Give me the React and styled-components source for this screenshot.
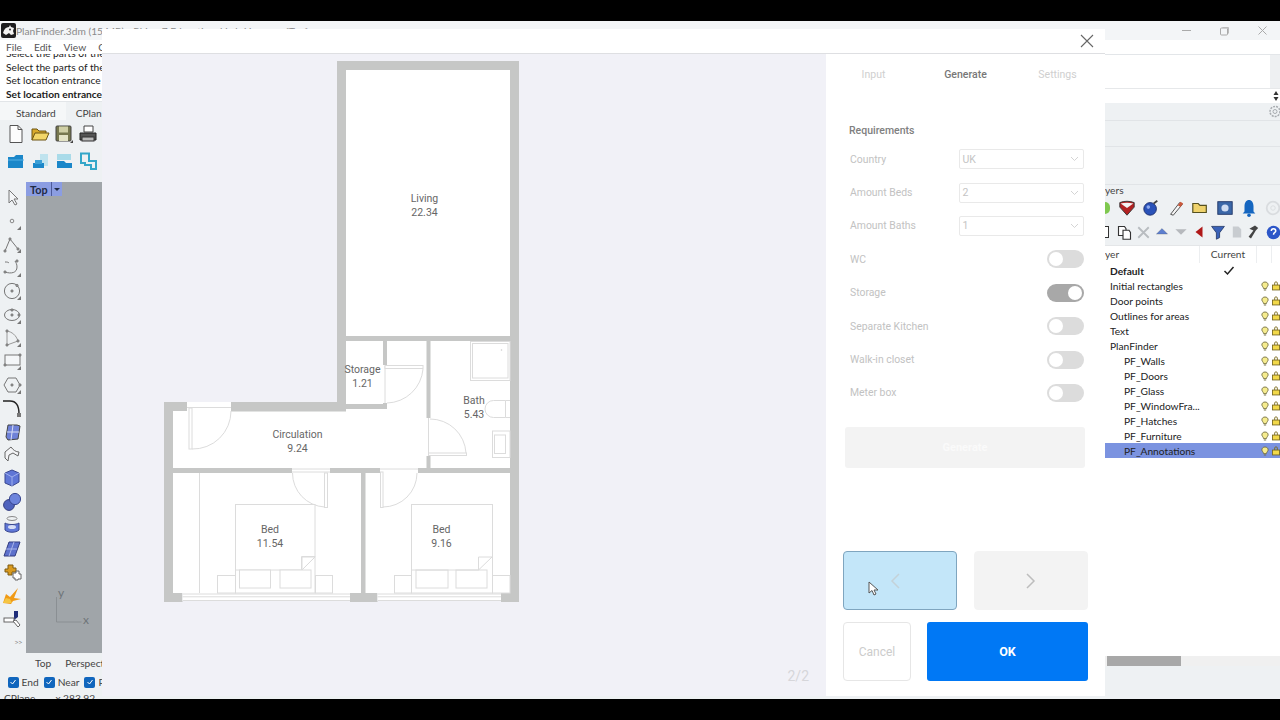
import React from "react"
import styled, { createGlobalStyle } from "styled-components"

const UI_FONT = `Roboto, "Noto Sans", sans-serif`
const RHINO_FONT = `Lato, "Noto Sans", sans-serif`
const RHINO_SIZE = "10.2px"

const GlobalStyle = createGlobalStyle`
  html, body { margin: 0; padding: 0; background: #000; }
  * { box-sizing: border-box; }
  body { font-family: ${RHINO_FONT}; }
`

const Page = styled.div`
  position: relative;
  width: 1280px;
  height: 720px;
  padding: 21px 0;
  background: #000;
  overflow: hidden;
`
const RhinoWindow = styled.div`
  display: flex;
  flex-direction: column;
  height: 678px;
  background: #eef1f3;
  overflow: hidden;
`
const TitleBar = styled.div`
  display: flex;
  align-items: center;
  flex: 0 0 19px;
  padding-left: 1px;
  background: #f3f5f7;
  color: #8a8a8a;
  font-size: ${RHINO_SIZE};
  white-space: nowrap;
`
const TitleText = styled.span`
  flex: 1;
`
const WindowControls = styled.div`
  display: flex;
  gap: 25px;
  padding-right: 11px;
`
const Body = styled.div`
  display: flex;
  flex: 1;
  min-height: 0;
`

/* left: rhino viewport side */
const LeftPane = styled.div`
  display: flex;
  flex-direction: column;
  flex: 0 0 102px;
  overflow: hidden;
`
const MenuBar = styled.div`
  display: flex;
  align-items: center;
  flex: 0 0 14px;
  gap: 12px;
  padding-left: 6px;
  background: #fff;
  color: #555;
  font-size: ${RHINO_SIZE};
  white-space: nowrap;
`
const History = styled.div`
  flex: 0 0 48px;
  padding-left: 6px;
  background: #fff;
  border-bottom: 1px solid #e2e5e8;
  overflow: hidden;
  white-space: nowrap;
`
const HistoryLine = styled.div`
  height: 13.7px;
  line-height: 13.7px;
  font-size: ${RHINO_SIZE};
  font-weight: ${p => (p.$bold ? 700 : 400)};
  color: #1c1c1c;
  &:first-child { margin-top: -7px; }
`
const ToolPanel = styled.div`
  flex: 0 0 80px;
  display: flex;
  flex-direction: column;
  padding-top: 5px;
`
const ToolTabs = styled.div`
  display: flex;
  align-items: flex-end;
  height: 13px;
  font-size: ${RHINO_SIZE};
  color: #444;
  white-space: nowrap;
`
const ToolTab = styled.div`
  height: 18px;
  padding: 3px 10px 0 ${p => (p.$active ? "16px" : "10px")};
  width: ${p => (p.$active ? "67px" : "auto")};
  line-height: 16px;
  background: ${p => (p.$active ? "#f5f7f8" : "transparent")};
`
const IconRow = styled.div`
  display: flex;
  align-items: center;
  height: 27px;
  padding-left: 5px;
  gap: 2px;
`
const IconCell = styled.div`
  display: flex;
  align-items: center;
  justify-content: center;
  width: 22px;
  height: 24px;
`
const WorkArea = styled.div`
  display: flex;
  flex: 0 0 490px;
`
const SideTools = styled.div`
  display: flex;
  flex-direction: column;
  flex: 0 0 26px;
  padding: 4px 2px 0 0;
`
const SideTool = styled.div`
  display: flex;
  align-items: center;
  justify-content: center;
  flex: 0 0 23.4px;
`
const MoreTools = styled(SideTool)`
  padding-left: 12px;
  color: #8a8a8a;
  font-size: 8px;
  letter-spacing: -1px;
`
const ViewColumn = styled.div`
  display: flex;
  flex-direction: column;
  flex: 1;
`
const Viewport = styled.div`
  position: relative;
  flex: 0 0 471px;
  background: #a0a5a9;
`
const ViewBadge = styled.div`
  display: flex;
  align-items: center;
  width: 36px;
  height: 14px;
  padding-left: 4px;
  background: #8b9de2;
  color: #1f2a44;
  font-size: 10.8px;
  font-weight: 700;
`
const BadgeArrow = styled.span`
  margin-left: 3.5px;
  padding-left: 2px;
  border-left: 1px solid #4d5a99;
  height: 14px;
  display: flex;
  align-items: center;
  &::after {
    content: "";
    border: 3px solid transparent;
    border-top: 3px solid #1f2a44;
    margin-top: 3px;
  }
`
const AxisMark = styled.svg`
  position: absolute;
  left: 26px;
  top: 404px;
`
const AxisLetter = styled.text`
  font-family: ${RHINO_FONT};
  font-size: 12px;
  fill: #6e7478;
`
const ViewTabs = styled.div`
  display: flex;
  flex: 1;
  align-items: center;
  font-size: ${RHINO_SIZE};
  color: #444;
  white-space: nowrap;
  padding-left: 9px;
  gap: 14px;
`
const SnapRow = styled.div`
  display: flex;
  align-items: center;
  flex: 0 0 20px;
  padding-left: 7.5px;
  gap: 5px;
  font-size: ${RHINO_SIZE};
  color: #444;
  white-space: nowrap;
`
const Snap = styled.span`
  display: flex;
  align-items: center;
  gap: 3px;
`
const SnapBox = styled.span`
  display: flex;
  align-items: center;
  justify-content: center;
  width: 11px;
  height: 11px;
  border-radius: 2px;
  background: #1066bd;
`
const StatusLine = styled.div`
  display: flex;
  flex: 0 0 8px;
  gap: 20px;
  padding-left: 4px;
  font-size: ${RHINO_SIZE};
  line-height: 12px;
  color: #444;
  white-space: nowrap;
  overflow: hidden;
`

/* under the dialog: only the tops of the status text stick out */
const CenterGap = styled.div`
  display: flex;
  flex: 1;
  flex-direction: column;
  justify-content: flex-end;
  min-width: 0;
`
const StatusFragments = styled.div`
  display: flex;
  height: 12px;
  margin-bottom: -9px;
  padding-left: 22px;
  gap: 46px;
  font-size: 10px;
  line-height: 12px;
  color: #333;
  white-space: nowrap;
  overflow: hidden;
`

/* right: layers panel */
const RightPane = styled.div`
  display: flex;
  flex-direction: column;
  flex: 0 0 175px;
  overflow: hidden;
`
const WhiteStrip = styled.div`
  flex: 0 0 ${p => p.$h}px;
  background: #fff;
  border-bottom: 1px solid #e3e6e9;
`
const PropBox = styled.div`
  display: flex;
  flex: 0 0 33px;
  background: #fff;
  justify-content: flex-end;
`
const PropGutter = styled.div`
  width: 10px;
  background: #eef0f2;
`
const InputStrip = styled.div`
  display: flex;
  flex: 0 0 15px;
  align-items: center;
  justify-content: flex-end;
  padding-right: 1px;
  background: #fff;
  border-top: 1px solid #e6e8ea;
`
const GrayRow = styled.div`
  display: flex;
  align-items: center;
  justify-content: flex-end;
  flex: 0 0 ${p => p.$h}px;
  border-bottom: 1px solid #e1e4e7;
`
const PanelTab = styled.div`
  flex: 0 0 11px;
  font-size: ${RHINO_SIZE};
  line-height: 10px;
  color: #444;
`
const RightIcons = styled.div`
  display: flex;
  align-items: center;
  flex: 0 0 ${p => p.$h}px;
  overflow: hidden;
`
const RightCell = styled.div`
  display: flex;
  align-items: center;
  justify-content: center;
  flex: 0 0 ${p => p.$w}px;
`
const LayerStub = styled.div`
  flex: 0 0 ${p => p.$w}px;
  height: 12px;
  margin-right: ${p => p.$gap}px;
  background: ${p => p.$fill};
  border: ${p => (p.$outline ? "1px solid #333" : "none")};
  border-left: none;
  border-radius: ${p => (p.$outline ? "0" : "0 6px 6px 0")};
`
const LayerHead = styled.div`
  display: grid;
  grid-template-columns: 95px 57px 15px 8px;
  flex: 0 0 18px;
  align-items: center;
  background: #fff;
  border-top: 1px solid #e4e6e8;
  color: #444;
  font-size: ${RHINO_SIZE};
`
const HeadCell = styled.div`
  height: 100%;
  line-height: 17px;
  text-align: ${p => (p.$center ? "center" : "left")};
  border-right: ${p => (p.$last ? "none" : "1px solid #eceef0")};
`
const LayerList = styled.div`
  display: flex;
  flex-direction: column;
  flex: 0 0 393px;
  background: #fff;
`
const LayerRow = styled.div`
  display: flex;
  align-items: center;
  height: 15px;
  flex: 0 0 15px;
  padding-left: ${p => (p.$child ? "19px" : "5px")};
  background: ${p => (p.$selected ? "#7b93e0" : "transparent")};
  color: #222;
  font-size: ${RHINO_SIZE};
  font-weight: ${p => (p.$bold ? 700 : 400)};
  white-space: nowrap;
`
const LayerName = styled.span`
  flex: 1;
`
const LayerCheck = styled.svg`
  margin-right: 45px;
`
const LayerIcons = styled.span`
  display: flex;
  align-items: center;
  gap: 3px;
  width: 19px;
  overflow: hidden;
`
const HScroll = styled.div`
  display: flex;
  flex: 0 0 10px;
  padding-left: 2px;
  background: #f0f0f0;
`
const HThumb = styled.div`
  width: 74px;
  background: #a8a8a8;
`

/* the dialog that lies over the rhino window */
const Modal = styled.div`
  position: absolute;
  left: 102px;
  top: 29px;
  display: flex;
  flex-direction: column;
  width: 1003px;
  height: 667px;
  background: #fff;
  font-family: ${UI_FONT};
`
const ModalHeader = styled.div`
  display: flex;
  align-items: center;
  justify-content: flex-end;
  flex: 0 0 25px;
  padding-right: 11px;
  border-bottom: 1px solid #dedfe2;
`
const ModalBody = styled.div`
  display: flex;
  flex: 1;
  min-height: 0;
`
const Canvas = styled.div`
  position: relative;
  flex: 0 0 724px;
  background: #f1f1f7;
`
const PlanSvg = styled.svg`
  display: block;
`
const Wall = styled.rect`
  fill: #c6c7c6;
`
const Floor = styled.polygon`
  fill: #fff;
`
const Fixture = styled.rect`
  fill: #fff;
  stroke: #dcdcdc;
  stroke-width: 1;
`
const Line = styled.path`
  fill: none;
  stroke: #dcdcdc;
  stroke-width: 1;
`
const RoomText = styled.text`
  font-family: ${UI_FONT};
  font-size: 10.5px;
  fill: #666;
  text-anchor: middle;
`
const PageCount = styled.div`
  position: absolute;
  right: 17px;
  bottom: 12px;
  color: #d6d6da;
  font-size: 14px;
`
const Panel = styled.div`
  display: flex;
  flex-direction: column;
  flex: 1;
  background: #fff;
`
const Tabs = styled.div`
  display: grid;
  grid-template-columns: repeat(3, 92px);
  flex: 0 0 40px;
  padding-left: 1.5px;
  align-items: center;
  justify-items: center;
`
const Tab = styled.div`
  font-size: 10.5px;
  font-weight: ${p => (p.$active ? 500 : 400)};
  color: ${p => (p.$active ? "#777" : "#cfcfcf")};
`
const SectionTitle = styled.div`
  flex: 0 0 48.5px;
  padding: 29px 0 3px 23px;
  font-size: 10.5px;
  line-height: 16px;
  font-weight: 500;
  color: #808080;
`
const Row = styled.div`
  display: flex;
  align-items: center;
  justify-content: space-between;
  flex: 0 0 33.4px;
  padding: 0 21.5px 0 24px;
`
const RowLabel = styled.span`
  font-size: 10.4px;
  color: #c2c2c2;
`
const Select = styled.div`
  display: flex;
  align-items: center;
  justify-content: space-between;
  width: 125px;
  height: 20px;
  padding: 0 4px 0 3px;
  border: 1px solid #e9e9e9;
  border-radius: 2px;
  color: #c4c4c4;
  font-size: 10.5px;
`
const Toggle = styled.div`
  display: flex;
  align-items: center;
  justify-content: ${p => (p.$on ? "flex-end" : "flex-start")};
  width: 36.5px;
  height: 18px;
  padding: 0 2px;
  border-radius: 9px;
  background: ${p => (p.$on ? "#a8a8a8" : "#dcdcdc")};
  &::after {
    content: "";
    width: 14px;
    height: 14px;
    border-radius: 50%;
    background: #fff;
  }
`
const GenerateButton = styled.div`
  display: flex;
  align-items: center;
  justify-content: center;
  flex: 0 0 41px;
  width: 240px;
  margin: 17px 0 0 19px;
  border-radius: 3px;
  background: #f3f3f3;
  color: #fafafa;
  font-size: 11px;
  font-weight: 700;
`
const ButtonGrid = styled.div`
  display: flex;
  gap: ${p => p.$gap}px;
  margin: ${p => p.$top}px 0 0 17px;
  height: ${p => p.$h}px;
`
const NavButton = styled.div`
  position: relative;
  display: flex;
  align-items: center;
  justify-content: center;
  width: 114px;
  border-radius: 4px;
  border: 1px solid ${p => (p.$hover ? "#7fa5bf" : "#f3f3f3")};
  background: ${p => (p.$hover ? "#c3e6f9" : "#f3f3f3")};
`
const Chevron = styled.svg`
  margin-left: ${p => (p.$shift ? "-10px" : "0")};
`
const Pointer = styled.svg`
  position: absolute;
  left: 24px;
  top: 29px;
`
const CancelButton = styled.div`
  display: flex;
  align-items: center;
  justify-content: center;
  width: 68px;
  border: 1px solid #e6e6e6;
  border-radius: 4px;
  color: #cccccc;
  font-size: 12px;
`
const OkButton = styled.div`
  display: flex;
  align-items: center;
  justify-content: center;
  width: 161px;
  border-radius: 3px;
  background: #0078f5;
  color: #fff;
  font-size: 12.5px;
  font-weight: 700;
`

/* ---- drawings ---- */
const Svg = ({ s = 20, children }) => (
  <svg width={s} height={s} viewBox="0 0 20 20" fill="none">{children}</svg>
)
const Node = ({ x, y, r = 1.2 }) => <circle cx={x} cy={y} r={r} fill="#999" stroke="#666" strokeWidth="0.6" />
const Corner = () => <path d="M19 15v4h-4z" fill="#777" />
const G = "#777"

const RhinoLogo = () => (
  <svg width="15" height="15" viewBox="0 0 15 15">
    <rect width="15" height="15" rx="2" fill="#1d1d1f" />
    <path d="M2 10c1-4 3-6 6-6l1-2 1 2 3 1-1 3 1 3-3 1-2-2-3 2z" fill="#f2f2f2" />
    <circle cx="9" cy="6.5" r="0.9" fill="#1d1d1f" />
  </svg>
)

const sideTools = [
  <Svg key="a"><path d="M7 2v13l3-3 3 5 2-1-3-5h4z" fill="#f4f6f8" stroke="#777" /></Svg>,
  <Svg key="b"><circle cx="10" cy="10" r="1.8" stroke="#888" /><Corner /></Svg>,
  <Svg key="c"><path d="M3 17 8 5l8 10" stroke={G} /><Node x={3} y={17} /><Node x={8} y={5} /><Node x={16} y={15} /><Corner /></Svg>,
  <Svg key="d"><path d="M3 14c6 2 12 1 12-5 0-3-1-4-2-6M3 4c2 0 3 0 4 1" stroke={G} /><Node x={3} y={14} /><Node x={15} y={3} /><Corner /></Svg>,
  <Svg key="e"><circle cx="10" cy="10" r="7.6" stroke={G} /><Node x={10} y={10} /><Node x={15} y={4.5} /><Corner /></Svg>,
  <Svg key="f"><ellipse cx="10" cy="10" rx="7.5" ry="5.5" stroke={G} /><Node x={10} y={10} /><Node x={10} y={5} /><Node x={17} y={10} /><Corner /></Svg>,
  <Svg key="g"><path d="M5 3c5 1 9 4 11 10L5 17z" stroke="#999" /><Node x={5} y={3} /><Node x={16} y={13} /><Node x={5} y={17} /><Corner /></Svg>,
  <Svg key="h"><rect x="3" y="4" width="15" height="10" stroke={G} fill="#f4f6f8" /><Node x={3} y={14} /><Node x={18} y={4} /><Corner /></Svg>,
  <Svg key="i"><path d="M6 3h8l4 7-4 7H6l-4-7z" stroke={G} /><Node x={10} y={10} /><Node x={18} y={10} /><Corner /></Svg>,
  <Svg key="j"><path d="M1 3h7c7 0 9 5 9 13" stroke="#222" strokeWidth="1.4" /><rect x="15" y="15" width="4" height="4" fill="#777" /></Svg>,
  <Svg key="k"><path d="M6 3h9l3 1-2 13-10 1-2-3z" fill="#6f82d8" stroke="#444" /><path d="M5 10h12M11 3 9 18" stroke="#d8def5" /></Svg>,
  <Svg key="l"><path d="M3 7 9 2c2 3 5 5 8 5l-1 4-5-3-4 2-1 6-3-3z" fill="#f3f4f6" stroke="#666" /></Svg>,
  <Svg key="m"><path d="m10 2 7 3v9l-7 4-7-3V5z" fill="#5f76d6" stroke="#39478f" /><path d="M3 5l7 4 7-4M10 9v9" stroke="#9fb0ec" /></Svg>,
  <Svg key="n"><circle cx="7" cy="13" r="5.4" fill="#4e62bd" stroke="#333d80" /><circle cx="13" cy="7" r="5.6" fill="#6d84dc" stroke="#39478f" /></Svg>,
  <Svg key="o"><ellipse cx="10" cy="3.5" rx="5" ry="2" stroke="#888" /><path d="M3 8v7c3 3 11 3 14 0V8c-3 2-11 2-14 0z" fill="#6078d8" stroke="#39478f" /><ellipse cx="10" cy="12" rx="4" ry="2" fill="#d7def5" /></Svg>,
  <Svg key="p"><path d="M7 3h11l-5 14H2z" fill="#5d71cc" stroke="#333d80" /><path d="M12 3 7 17M4 10h11" stroke="#a9b5ea" /></Svg>,
  <Svg key="q"><path d="M3 7h3V3h5v3h3v4h-4v3H6v-3H3z" fill="#d99a1e" stroke="#7d5a12" /><path d="M11 11h3V9h3v3h2v5h-3v1h-3v-2h-2z" fill="#fff" stroke="#666" /></Svg>,
  <Svg key="r"><path d="M1 18 4 9l4 3 8-9-4 10 7 1-8 2-2 3z" fill="#f09a15" /><path d="M1 18 4 13l4 1 2 4z" fill="#f5c542" /></Svg>,
  <Svg key="s"><path d="M12 2h4v6l-4 3z" fill="#1f2d7a" /><rect x="2" y="9" width="10" height="4" fill="#fff" stroke="#666" /><path d="m11 12 3-1 4 5-2 2z" fill="#fff" stroke="#666" /></Svg>,
]

const Doc = () => <Svg s={20}><path d="M4 1.5h8l4 4v13H4z" fill="#fdfdfd" stroke="#555" /><path d="M12 1.5v4h4" stroke="#555" /></Svg>
const Folder = () => <Svg s={20}><path d="M2 16V5h5l2 2h7v3" fill="#d8a92b" stroke="#6d5512" /><path d="M2 16 5 9h14l-3 7z" fill="#f3d668" stroke="#6d5512" /></Svg>
const Floppy = () => <Svg s={20}><rect x="2" y="2" width="15" height="15" rx="1" fill="#77784f" stroke="#444" /><rect x="5" y="2.5" width="9" height="6" fill="#cfcfa5" /><rect x="5" y="11" width="9" height="6" fill="#e3e3c5" /><path d="M16 19h3v-3z" fill="#444" /></Svg>
const Printer = () => <Svg s={20}><path d="M6 2h9v6H6z" fill="#fff" stroke="#444" /><path d="M2 9h16v7H2z" fill="#555" stroke="#222" /><rect x="4" y="13" width="12" height="4" fill="#bbb" stroke="#333" /></Svg>
const BlueFolder = () => <Svg s={20}><path d="M2 17V6h6l2-2h7v13z" fill="#1b87c9" /><path d="M2 9h16" stroke="#54b1e5" /></Svg>
const BlueCouch = () => <Svg s={20}><path d="M10 3h8v12h-8z" fill="#bfe3ee" /><path d="M3 12h11v5H3z" fill="#1b87c9" /><path d="M5 9h7v4H5z" fill="#3b9fd6" /></Svg>
const BlueSteps = () => <Svg s={20}><path d="M3 3h14v6H3z" fill="#a9dbe9" /><path d="M3 10l7 0 2 2h6v5H3z" fill="#1b87c9" /></Svg>
const BlueBracket = () => <Svg s={20}><path d="M7 12H3V2.5h8V10h7v8h-5v-4H7z" stroke="#35a7c9" strokeWidth="2" /></Svg>

const TriUp = ({ c }) => <Svg s={14}><path d="M2 13 10 5l8 8z" fill={c} stroke="#444" strokeOpacity="0.35" /></Svg>
const TriDown = ({ c }) => <Svg s={14}><path d="M2 6h16l-8 8z" fill={c} /></Svg>

const topRightIcons = [
  <Svg key="b" s={18}><path d="M2 4c5-2 11-2 16 0v5l-8 9-8-9z" fill="#b32222" stroke="#333" /><path d="M3 5c4-1 10-1 14 0l-7 5z" fill="#f4f4f4" /></Svg>,
  <Svg key="c" s={18}><circle cx="9" cy="11" r="7" fill="#2a52b8" stroke="#1b2c6b" /><path d="M13 5l4-3" stroke="#444" strokeWidth="2" /><circle cx="7" cy="9" r="2" fill="#8da9ef" /></Svg>,
  <Svg key="d" s={18}><path d="M4 17 14 4l3 2L7 18z" fill="#f5f5f5" stroke="#444" /><path d="M12 7l3-4 3 2-3 4z" fill="#c9583c" /></Svg>,
  <Svg key="e" s={18}><path d="M2 15V5h6l2 2h7v8z" fill="#efd26c" stroke="#55501f" strokeWidth="1.3" /></Svg>,
  <Svg key="f" s={18}><rect x="2" y="3" width="16" height="14" fill="#3b67a8" stroke="#1f3565" /><circle cx="10" cy="10" r="4" fill="#cfdcf2" /></Svg>,
  <Svg key="g" s={18}><path d="M10 1c3 0 5 3 5 7v6l2 2H3l2-2V8c0-4 2-7 5-7z" fill="#1566c0" /><circle cx="10" cy="18" r="2" fill="#1566c0" /></Svg>,
  <Svg key="h" s={18}><circle cx="10" cy="10" r="7" fill="none" stroke="#d9dcdf" strokeWidth="2" /><circle cx="10" cy="10" r="2.5" stroke="#d9dcdf" /></Svg>,
]
const botRightIcons = [
  <Svg key="b" s={15}><path d="M2 2h8l2 3v9H2z" fill="#fff" stroke="#333" strokeWidth="1.5" /><path d="M8 7h8l2 3v9H8z" fill="#fff" stroke="#333" strokeWidth="1.5" /></Svg>,
  <Svg key="c" s={15}><path d="M3 3 17 17M17 3 3 17" stroke="#b8bcc0" strokeWidth="2.4" /></Svg>,
  <TriUp key="d" c="#5d7fd0" />,
  <TriDown key="e" c="#b6b9bd" />,
  <Svg key="f" s={14}><path d="M15 2v16L5 10z" fill="#b01818" /></Svg>,
  <Svg key="g" s={16}><path d="M2 3h16l-6 8v6l-4 2v-8z" fill="#3a62b8" stroke="#1f3565" /></Svg>,
  <Svg key="h" s={14}><path d="M4 2h8l4 4v12H4z" fill="#c8ccd0" /></Svg>,
  <Svg key="i" s={16}><path d="M3 6 10 2l4 3-3 3-6 10-3-2 6-8z" fill="#444" /></Svg>,
  <Svg key="j" s={15}><circle cx="10" cy="10" r="9" fill="#2c56c8" /><path d="M7 8c0-4 6-4 6 0 0 2-3 2-3 5" stroke="#fff" strokeWidth="2" /></Svg>,
]

const Bulb = () => (
  <svg width="9" height="12" viewBox="0 0 9 11"><path d="M4.5 1C2.4 1 1 2.4 1 4.2c0 1.5 1.6 2.4 2 4.3h3c.4-1.9 2-2.8 2-4.3C8 2.4 6.6 1 4.5 1z" fill="#f6ec8e" stroke="#6f6a3c" /><path d="M3.2 10h2.6" stroke="#6f6a3c" /></svg>
)
const Lock = () => (
  <svg width="9" height="11" viewBox="0 0 9 11"><path d="M3 5V2.6C3 1 6 1 6 2.6V5" fill="none" stroke="#7a6a20" /><rect x="0.5" y="5" width="8" height="5.5" fill="#f2d94a" stroke="#7a6a20" /></svg>
)

const Check = () => <svg width="8" height="8" viewBox="0 0 8 8"><path d="m1.5 4 2 2 3-4" fill="none" stroke="#fff" strokeWidth="1" /></svg>

const SmallChevron = () => (
  <svg width="9" height="6" viewBox="0 0 9 6"><path d="m1 1 3.5 3.5L8 1" fill="none" stroke="#d4d4d4" /></svg>
)

const Door = ({ leaf, arc, jamb }) => (
  <g>
    {jamb && <Line d={jamb} />}
    <Fixture x={leaf[0]} y={leaf[1]} width={leaf[2]} height={leaf[3]} />
    <Line d={arc} />
  </g>
)

const walls = [
  [337, 61, 182, 9], [337, 61, 9, 350], [510, 61, 9, 541], [346, 336, 164, 5],
  [231, 402, 115, 9.5], [346, 404, 41, 5], [383, 341, 4, 24], [383, 403, 4, 6],
  [426.5, 341, 4, 77], [426.5, 456, 4, 13], [164, 402, 9, 200], [164, 402, 23, 9],
  [173, 468, 119, 5], [330, 468, 50, 5], [418, 468, 92, 5], [361, 473, 4.5, 120],
  [164, 593, 18.5, 9], [350, 593, 27.5, 9], [501, 593, 18, 9],
]

const rooms = [
  ["Living", "22.34", 424.5, 202],
  ["Circulation", "9.24", 297.5, 438],
  ["Storage", "1.21", 362.5, 373],
  ["Bath", "5.43", 474, 404],
  ["Bed", "11.54", 270, 533],
  ["Bed", "9.16", 441.5, 533],
]

const FloorPlan = () => (
  <PlanSvg width="724" height="642" viewBox="102 54 724 642">
    <Floor points="346,70 510,70 510,593 173,593 173,411 346,411" />
    <Floor points="187,402 231,402 231,412 187,412" />
    {walls.map(([x, y, w, h]) => <Wall key={`${x}-${y}`} x={x} y={y} width={w} height={h} />)}

    {/* bottom windows */}
    <Floor points="182.5,593 350,593 350,601 182.5,601" />
    <Floor points="377.5,593 501,593 501,601 377.5,601" />
    <Line d="M182.5 594h167.5M182.5 596.8h167.5M182.5 600.5h167.5M377.5 594H501M377.5 596.8H501M377.5 600.5H501" />

    {/* doors */}
    <Line d="M187 407.5h44" />
    <Door leaf={[189, 408, 3, 41]} arc="M231 411A38 38 0 0 1 192 449" />
    <Door leaf={[385, 365.5, 38, 3]} arc="M423 369A37 37 0 0 1 387 403" jamb="M385 366V403" />
    <Door leaf={[428.5, 453, 38, 2.5]} arc="M430 419A36 36 0 0 1 466 453" jamb="M428.5 418V456" />
    <Line d="M292 469h38M292 472h38M380 469h38" />
    <Door leaf={[324.5, 473, 3, 34.5]} arc="M292.5 473A34 34 0 0 0 324.5 507" />
    <Door leaf={[380.5, 472, 2.5, 35.5]} arc="M417 473A34 34 0 0 1 383 507" />

    {/* bath */}
    <Fixture x="470.5" y="341.5" width="39.5" height="39" />
    <Fixture x="472.5" y="343.5" width="35.5" height="34.5" />
    <circle cx="501.5" cy="350" r="0.8" fill="#ccc" />
    <Line d="M505.5 400.5h-12a8.3 8.3 0 0 0 0 17h12M505.5 400.5v17M505.5 400.5H510M505.5 417.5H510" />
    <Fixture x="492.5" y="431" width="17.5" height="26.5" />
    <Fixture x="494.5" y="435" width="11" height="18.5" />

    {/* bed 1 */}
    <Line d="M199.5 473v120" />
    <Fixture x="235.5" y="504.5" width="79.5" height="88.5" />
    <Line d="M235.5 570H301.5V556.5H315L301.5 570" />
    <Fixture x="239.5" y="570" width="31" height="18" />
    <Fixture x="280" y="570" width="31" height="18" />
    <Fixture x="217.5" y="575.5" width="18" height="17.5" />
    <Fixture x="315.5" y="575.5" width="17" height="17.5" />
    <Floor points="302,557 314.5,557 302,569.5" />
    <Line d="M302 570V557H315L302 570" />

    {/* bed 2 */}
    <Fixture x="411.5" y="504.5" width="81" height="88.5" />
    <Fixture x="416" y="570" width="32" height="18" />
    <Fixture x="456" y="570" width="31" height="18" />
    <Fixture x="394.5" y="575.5" width="17" height="17.5" />
    <Fixture x="492.5" y="575.5" width="17.5" height="17.5" />
    <Line d="M411.5 570H478.5" />
    <Floor points="478.5,557 491.5,557 478.5,569.5" />
    <Line d="M478.5 570V557H492L478.5 570" />

    {rooms.map(([name, area, x, y]) => (
      <g key={`${name}-${area}`}>
        <RoomText x={x} y={y}>{name}</RoomText>
        <RoomText x={x} y={y + 13.5}>{area}</RoomText>
      </g>
    ))}
  </PlanSvg>
)

const layers = [
  { name: "Initial rectangles" },
  { name: "Door points" },
  { name: "Outlines for areas" },
  { name: "Text" },
  { name: "PlanFinder" },
  { name: "PF_Walls", child: true },
  { name: "PF_Doors", child: true },
  { name: "PF_Glass", child: true },
  { name: "PF_WindowFra...", child: true },
  { name: "PF_Hatches", child: true },
  { name: "PF_Furniture", child: true },
  { name: "PF_Annotations", child: true, selected: true },
]

const selects = [["Country", "UK"], ["Amount Beds", "2"], ["Amount Baths", "1"]]
const toggles = [["WC", false], ["Storage", true], ["Separate Kitchen", false], ["Walk-in closet", false], ["Meter box", false]]

export default function App() {
  return (
    <Page>
      <GlobalStyle />
      <RhinoWindow>
        <TitleBar>
          <RhinoLogo />
          <TitleText>PlanFinder.3dm (15 MB) - Rhino 7 Educational Lab License - [Top]</TitleText>
          <WindowControls>
            <svg width="13" height="13" viewBox="0 0 13 13"><path d="M2 6.5h9" stroke="#aaa" /></svg>
            <svg width="13" height="13" viewBox="0 0 13 13"><rect x="2.5" y="4" width="7" height="7" rx="1" fill="none" stroke="#aaa" /><path d="M4.5 3.5h6v6" fill="none" stroke="#bbb" /></svg>
            <svg width="13" height="13" viewBox="0 0 13 13"><path d="m2.5 2.5 8 8m0-8-8 8" stroke="#aaa" /></svg>
          </WindowControls>
        </TitleBar>
        <Body>
          <LeftPane>
            <MenuBar><span>File</span><span>Edit</span><span>View</span><span>C</span></MenuBar>
            <History>
              <HistoryLine>Select the parts of the</HistoryLine>
              <HistoryLine>Select the parts of the</HistoryLine>
              <HistoryLine>Set location entrance</HistoryLine>
              <HistoryLine $bold>Set location entrance</HistoryLine>
            </History>
            <ToolPanel>
              <ToolTabs><ToolTab $active>Standard</ToolTab><ToolTab>CPlan</ToolTab></ToolTabs>
              <IconRow>
                <IconCell><Doc /></IconCell><IconCell><Folder /></IconCell><IconCell><Floppy /></IconCell><IconCell><Printer /></IconCell>
              </IconRow>
              <IconRow>
                <IconCell><BlueFolder /></IconCell><IconCell><BlueCouch /></IconCell><IconCell><BlueSteps /></IconCell><IconCell><BlueBracket /></IconCell>
              </IconRow>
            </ToolPanel>
            <WorkArea>
              <SideTools>
                {sideTools.map((icon, i) => <SideTool key={i}>{icon}</SideTool>)}
                <MoreTools>&gt;&gt;</MoreTools>
              </SideTools>
              <ViewColumn>
                <Viewport>
                  <ViewBadge>Top<BadgeArrow /></ViewBadge>
                  <AxisMark width="50" height="50" viewBox="0 0 50 50">
                    <path d="M4.5 11v25h25" fill="none" stroke="#8a8f93" />
                    <AxisLetter x="6" y="11">y</AxisLetter>
                    <AxisLetter x="31" y="38">x</AxisLetter>
                  </AxisMark>
                </Viewport>
                <ViewTabs><span>Top</span><span>Perspective</span></ViewTabs>
              </ViewColumn>
            </WorkArea>
            <SnapRow>
              <Snap><SnapBox><Check /></SnapBox>End</Snap>
              <Snap><SnapBox><Check /></SnapBox>Near</Snap>
              <Snap><SnapBox><Check /></SnapBox>Point</Snap>
            </SnapRow>
            <StatusLine><span>CPlane</span><span>x 283.92</span></StatusLine>
          </LeftPane>

          <CenterGap>
            <StatusFragments>
              <span>y 1147.25</span><span>z 0.00</span><span>Millimeters</span>
              <span>Default Grid Snap Ortho Planar Osnap</span>
            </StatusFragments>
          </CenterGap>

          <RightPane>
            <WhiteStrip $h={15} />
            <PropBox><PropGutter /></PropBox>
            <InputStrip>
              <svg width="6" height="12" viewBox="0 0 6 12"><path d="M3 1 5.5 5h-5zM3 11 .5 7h5z" fill="#333" /></svg>
            </InputStrip>
            <GrayRow $h={18}>
              <svg width="13" height="13" viewBox="0 0 13 13"><circle cx="8" cy="6.5" r="5" fill="none" stroke="#a8acb0" strokeWidth="1.5" strokeDasharray="2 1" /><circle cx="8" cy="6.5" r="2" fill="none" stroke="#a8acb0" /></svg>
            </GrayRow>
            <GrayRow $h={26} />
            <GrayRow $h={38} />
            <PanelTab>yers</PanelTab>
            <RightIcons $h={23}>
              <LayerStub $w={5} $gap={4.8} $fill="#7fc84f" />
              {topRightIcons.map(icon => <RightCell key={icon.key} $w={24.4}>{icon}</RightCell>)}
            </RightIcons>
            <RightIcons $h={26}>
              <LayerStub $w={4} $gap={6.7} $fill="#fff" $outline />
              {botRightIcons.map(icon => <RightCell key={icon.key} $w={18.6}>{icon}</RightCell>)}
            </RightIcons>
            <LayerHead>
              <HeadCell>yer</HeadCell>
              <HeadCell $center>Current</HeadCell>
              <HeadCell />
              <HeadCell $last />
            </LayerHead>
            <LayerList>
              <LayerRow $bold>
                <LayerName>Default</LayerName>
                <LayerCheck width="12" height="10" viewBox="0 0 12 10"><path d="m1.5 5 3 3 6-7" fill="none" stroke="#222" strokeWidth="1.5" /></LayerCheck>
              </LayerRow>
              {layers.map(l => (
                <LayerRow key={l.name} $child={l.child} $selected={l.selected}>
                  <LayerName>{l.name}</LayerName>
                  <LayerIcons><Bulb /><Lock /></LayerIcons>
                </LayerRow>
              ))}
            </LayerList>
            <HScroll><HThumb /></HScroll>
          </RightPane>
        </Body>
      </RhinoWindow>

      <Modal>
        <ModalHeader>
          <svg width="14" height="14" viewBox="0 0 14 14"><path d="m1 1 12 12M13 1 1 13" stroke="#666" strokeWidth="1.1" /></svg>
        </ModalHeader>
        <ModalBody>
          <Canvas>
            <FloorPlan />
            <PageCount>2/2</PageCount>
          </Canvas>
          <Panel>
            <Tabs>
              <Tab>Input</Tab>
              <Tab $active>Generate</Tab>
              <Tab>Settings</Tab>
            </Tabs>
            <SectionTitle>Requirements</SectionTitle>
            {selects.map(([label, value]) => (
              <Row key={label}>
                <RowLabel>{label}</RowLabel>
                <Select>{value}<SmallChevron /></Select>
              </Row>
            ))}
            {toggles.map(([label, on]) => (
              <Row key={label}>
                <RowLabel>{label}</RowLabel>
                <Toggle $on={on} />
              </Row>
            ))}
            <GenerateButton>Generate</GenerateButton>
            <ButtonGrid $gap={17} $top={83.5} $h={59}>
              <NavButton $hover>
                <Chevron $shift width="12" height="18" viewBox="0 0 12 18"><path d="M10 2 3 9l7 7" fill="none" stroke="#c4d2d8" strokeWidth="1.5" /></Chevron>
                <Pointer width="11" height="16" viewBox="0 0 11 16"><path d="M1 1v11l3-2.5 2 4.5 2-1-2-4h4z" fill="#fff" stroke="#555" /></Pointer>
              </NavButton>
              <NavButton>
                <Chevron width="12" height="18" viewBox="0 0 12 18"><path d="m2 2 7 7-7 7" fill="none" stroke="#bdbdbd" strokeWidth="1.5" /></Chevron>
              </NavButton>
            </ButtonGrid>
            <ButtonGrid $gap={16} $top={12} $h={59}>
              <CancelButton>Cancel</CancelButton>
              <OkButton>OK</OkButton>
            </ButtonGrid>
          </Panel>
        </ModalBody>
      </Modal>
    </Page>
  )
}
